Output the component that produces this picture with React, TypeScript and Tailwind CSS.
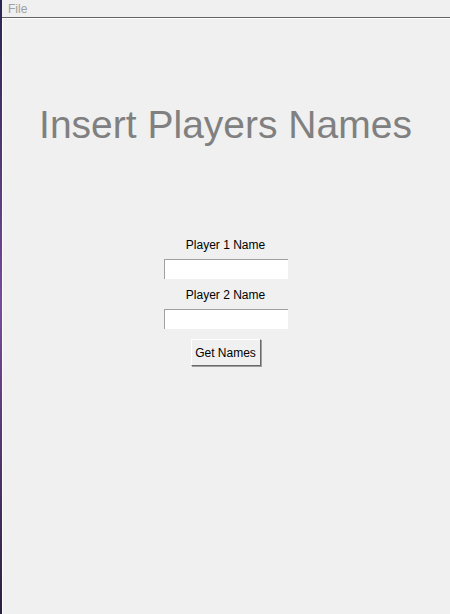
export default function App() {
  return (
    <div className="w-[450px] h-[614px] flex bg-[#f0f0f0] overflow-hidden" style={{ fontFamily: '"Liberation Sans", Arial, sans-serif' }}>
      <div className="w-[2px] h-full bg-gradient-to-b from-[#2a2550] via-[#7a4a9a] to-[#2a2040]" />
      <div className="flex-1 flex flex-col">
        <div className="h-[17px] flex items-center pl-[6px] text-[12px] text-[#a0a0a0] leading-none">File</div>
        <div className="h-[1px] bg-[#646464]" />
        <div className="flex-1 flex flex-col items-center border-l border-t border-white pr-[2px]">
          <div className="mt-[84px] text-[39px] leading-[44px] text-[#808080]">Insert Players Names</div>
          <div className="mt-[90px] text-[12px] leading-[16px] text-black">Player 1 Name</div>
          <div className="mt-[6px] w-[124px] h-[20px] bg-white border-t border-l border-[#a0a0a0]" />
          <div className="mt-[8px] text-[12px] leading-[16px] text-black">Player 2 Name</div>
          <div className="mt-[6px] w-[124px] h-[20px] bg-white border-t border-l border-[#a0a0a0]" />
          <button className="mt-[10px] w-[70px] h-[27px] text-[12px] text-black bg-[#f0f0f0] border border-t-white border-l-white border-r-[#696969] border-b-[#696969] shadow-[1px_1px_0_#a0a0a0]">Get Names</button>
        </div>
      </div>
    </div>
  );
}
